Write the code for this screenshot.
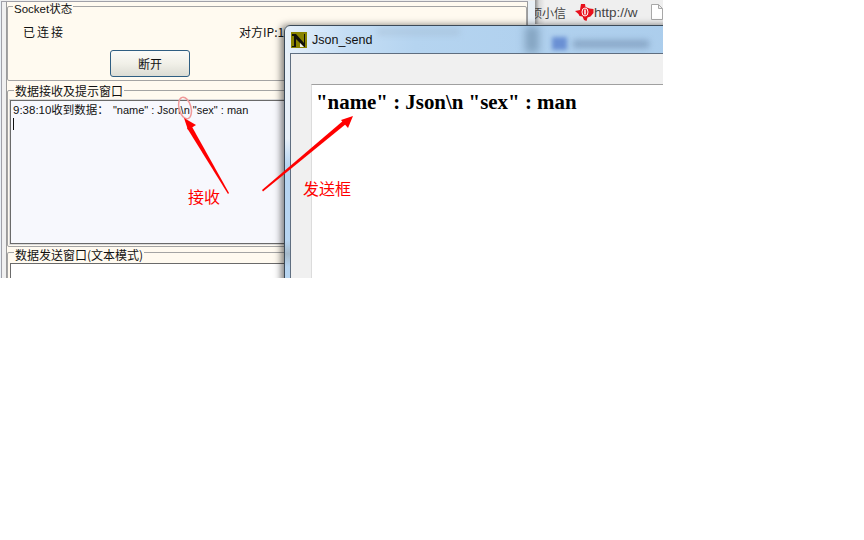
<div class="canvas">
  <div class="shot">
    <div class="app">
      <div class="frame">
        <div class="panel">
          <section class="group status">
            <span class="legend socket">Socket状态</span>
            <div class="status-row">
              <span class="wide">已连接</span>
              <span class="peer">对方IP:1</span>
            </div>
            <div class="btn-row"><button>断开</button></div>
          </section>
          <section class="group recv">
            <span class="legend">数据接收及提示窗口</span>
            <div class="textbox recv-box">
              <div class="line"><span class="cn">9:38:10收到数据：</span><span class="msg">"name" : Json\n "sex" : man</span></div>
              <i class="caret"></i>
            </div>
          </section>
          <section class="group send">
            <span class="legend">数据发送窗口(文本模式)</span>
            <div class="textbox send-box"></div>
          </section>
        </div>
      </div>
    </div>

    <div class="browser-bar">
      <span class="fav"><span>顷小信</span></span>
      <svg class="texas" width="19" height="17" viewBox="0 0 19 17">
        <path d="M0 7 5 6 6 0h4l.5 3 4 1.500 4 .5v4l-3 3.500-3 1-1 3.500-2.500-1-1.500-3.500-3-.5-1-2z" fill="#e8101c"/>
        <ellipse cx="10" cy="8" rx="3" ry="4" fill="none" stroke="#fff"/>
        <path d="M10 5.500v5" stroke="#fff" stroke-width="1.500"/>
      </svg>
      <span class="url">http://w</span>
      <svg class="doc" width="13" height="16" viewBox="0 0 13 16">
        <path d="M1.500.5h7l4 4v11h-11zM8.500.5v4h4" fill="#fff" stroke="#a8a8a8"/>
      </svg>
    </div>

    <div class="window">
      <div class="titlebar">
        <svg class="n-icon" width="16" height="16" viewBox="0 0 16 16">
          <rect width="16" height="16" fill="#8a8400"/>
          <path d="M1 2h4l8 9V2h1v13h-1L5 7v8H1V14h2V4H1z" fill="#12120c"/>
          <path d="M9 11l4 4H9z" fill="#f4f4ea"/>
        </svg>
        <span class="win-title">Json_send</span>
        <i class="blur grey"></i>
        <i class="blur band"></i>
        <i class="blur chip"></i>
        <i class="blur label"></i>
      </div>
      <div class="client">
        <div class="editor">"name" : Json\n "sex" : man</div>
      </div>
    </div>

    <svg class="marks" width="663" height="278" viewBox="0 0 663 278">
      <ellipse cx="185" cy="108" rx="6" ry="11" transform="rotate(-15 185 108)" fill="none" stroke="#f09a9a" stroke-width="1.500"/>
      <path d="M228 194 229 193 191 125l-4 3z" fill="#f00"/>
      <path d="M184 118l12 7-8 5z" fill="#f00"/>
      <path d="M262 190 263 191.500 346.500 123.500l-2.500-3.500z" fill="#f00"/>
      <path d="M353 116l-12 4 7 8z" fill="#f00"/>
    </svg>
    <span class="note n1">接收</span>
    <span class="note n2">发送框</span>
  </div>
</div>

<style>
  :global(body) { margin: 0; background: #fff; }
  .canvas { width: 864px; height: 540px; background: #fff; overflow: hidden; }
  .shot {
    position: relative; width: 663px; height: 278px; overflow: hidden;
    font-family: "Noto Sans CJK SC", "Liberation Sans", sans-serif;
    font-size: 12px; color: #111; background: #f0f0f0;
  }
  .app {
    width: 535px; height: 278px; box-sizing: border-box; border-top: 1px solid #eee;
    background: #e9f0f6;
  }
  .frame {
    height: 100%; box-sizing: border-box; width: 527px; margin-left: 1px;
    border-top: 1px solid #a0a0a8; border-left: 1px solid #a0a0a8;
    padding-left: 4px; background: #f0f0f0;
  }
  .panel {
    height: 100%; box-sizing: border-box; border-left: 1px solid #9a9a9a; border-right: 1px solid #9a9a9a;
    background: #fffaf0; padding-top: 4px;
  }
  .group {
    position: relative; box-sizing: border-box; border: 1px solid #a4a4a4; border-radius: 2px; background: #fffaf0;
  }
  .legend {
    position: absolute; left: 6px; top: -6px; padding: 0 1px; line-height: 12px; font-size: 12px; background: #fffaf0; white-space: nowrap;
  }
  .socket { left: 5px; top: -4px; font-size: 11.500px; font-family: "Liberation Sans", "Noto Sans CJK SC", sans-serif; }
  .status { height: 75px; }
  .status-row { display: flex; padding: 15px 0 0 15px; height: 20px; line-height: 20px; }
  .wide { letter-spacing: 2px; }
  .peer { margin-left: 174px; }
  .btn-row { padding: 8px 0 0 102px; }
  button {
    width: 80px; height: 27px; padding: 0; border: 1px solid #2f5e82; border-radius: 3px;
    background: linear-gradient(#fbfbf8, #f1f0e8 50%, #dcdcd4);
    font: inherit; color: #111; display: block;
  }
  .recv { height: 157px; margin-top: 9px; padding-top: 9px; }
  .send { height: 40px; margin-top: 5px; padding-top: 10px; border-bottom: 0; }
  .send .legend { top: -4px; }
  .textbox { box-sizing: border-box; margin-left: 2px; border: 1px solid #6a6a6a; }
  .recv-box {
    height: 144px; background: #f7f8fd; padding: 1px 2px; line-height: 14px;
    box-shadow: 0 0 0 1px #dcdcdc;
  }
  .line { white-space: nowrap; }
  .cn { font-size: 11.500px; font-family: "Liberation Sans", "Noto Sans CJK SC", sans-serif; }
  .msg { font-size: 11px; font-family: "Liberation Sans", sans-serif; margin-left: 4px; }
  .caret { display: block; width: 1px; height: 12px; background: #111; margin-top: 1px; }
  .send-box { height: 30px; background: #fff; }

  .browser-bar {
    position: absolute; left: 535px; top: 0; width: 128px; height: 24px;
    background: linear-gradient(90deg, #8f8f8f, #d8d8d8 4px, #efefef 10px);
    display: flex; align-items: center; box-sizing: border-box;
    font-family: "Liberation Sans", "Noto Sans CJK SC", sans-serif; color: #444; font-size: 12px;
  }
  .fav { width: 31px; flex: none; display: flex; justify-content: flex-end; overflow: hidden; white-space: nowrap; }
  .fav span { flex: none; }
  .texas { margin-left: 9px; flex: none; }
  .url { margin-left: 0; font-size: 13.500px; width: 56px; flex: none; }
  .doc { flex: none; }

  .window {
    position: absolute; left: 284px; top: 25px; width: 400px; height: 270px;
    box-sizing: border-box; border: 1px solid #3c4a58; border-radius: 6px 6px 0 0;
    background:
      linear-gradient(90deg, #e6f0fa, #c5def5 60px, #b5d4f0 130px, #abcdec) top / 100% 27px no-repeat,
      linear-gradient(180deg, #e8f0f8 0 42%, #b7d5f1 52% 80%, #a5b9ca 85%, #b7d5f1 90%);
    padding: 0 5px; box-shadow: -3px 0 7px rgba(0,0,0,.5);
    display: flex; flex-direction: column;
  }
  .titlebar { height: 27px; display: flex; align-items: center; gap: 5px; position: relative; flex: none; overflow: hidden; }
  .n-icon { flex: none; margin-left: 1px; }
  .win-title { font-family: "Liberation Sans", sans-serif; font-size: 12.500px; color: #111; }
  .blur { position: absolute; display: block; }
  .grey { left: 87px; top: 3px; width: 83px; height: 6px; background: #9eb2c6; filter: blur(3px); opacity: .4; }
  .band { left: 235px; top: 0; width: 14px; height: 27px; background: #5f7f9c; filter: blur(4px); opacity: .55; }
  .chip { left: 262px; top: 11px; width: 15px; height: 13px; background: #6a90d4; filter: blur(2px); }
  .label { left: 283px; top: 14px; width: 76px; height: 8px; background: #7f9cbd; filter: blur(3px); opacity: .8; }
  .client {
    flex: 1; background: #f0f0f0; border: 1px solid #5f6e80; border-bottom: 0;
    padding: 30px 0 0 20px;
  }
  .editor {
    height: 200px; background: #fff; border-top: 1px solid #a0a0a0; border-left: 1px solid #dcdcdc;
    padding: 6px 0 0 4px;
    font-family: "Liberation Serif", serif; font-weight: 700; font-size: 20.900px; line-height: 22px;
    color: #000; white-space: nowrap;
  }
  .marks { position: absolute; left: 0; top: 0; pointer-events: none; }
  .note { position: absolute; color: #f00; font-size: 16px; line-height: 20px; font-family: "Noto Sans CJK SC", sans-serif; }
  .n1 { left: 188px; top: 186px; }
  .n2 { left: 303px; top: 178px; }
</style>
